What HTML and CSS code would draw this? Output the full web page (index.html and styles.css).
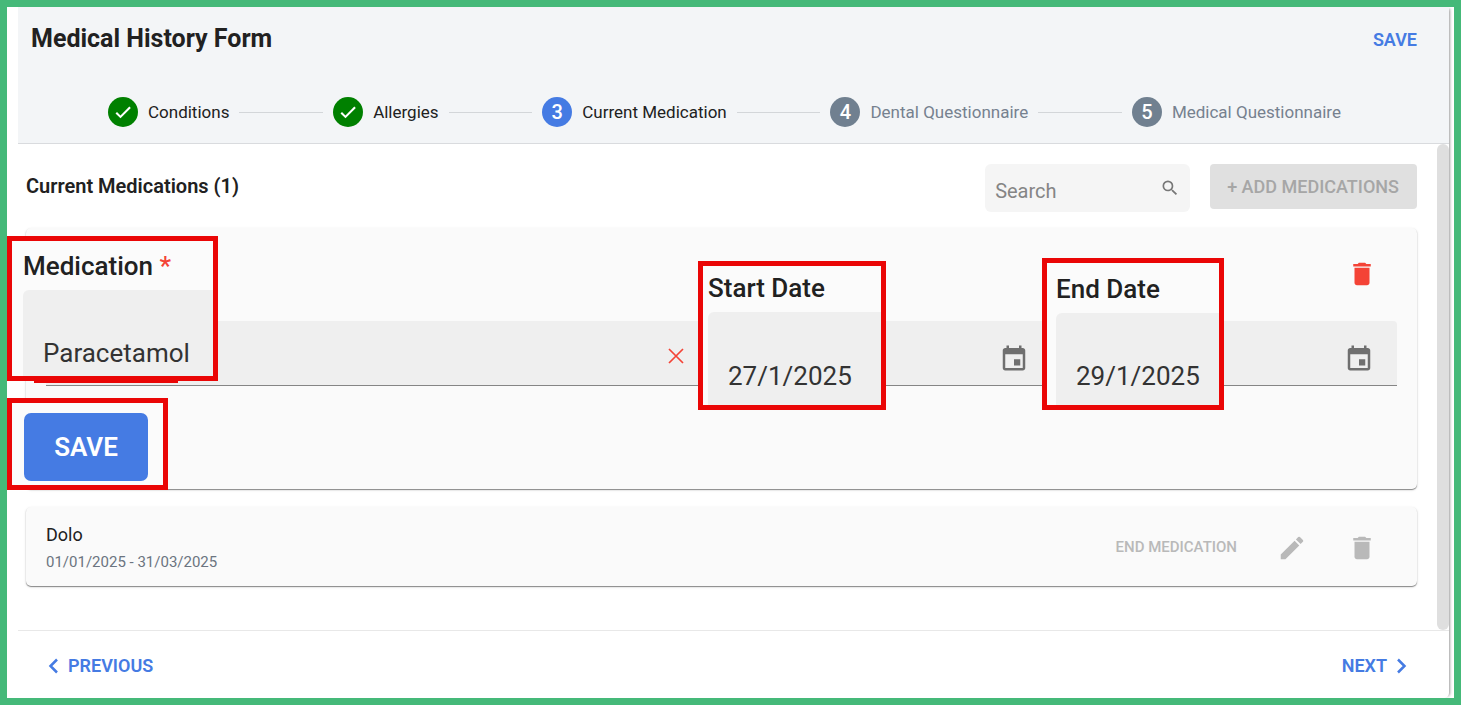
FILE: index.html
```html
<!DOCTYPE html>
<html lang="en">
<head>
<meta charset="utf-8">
<title>Medical History Form</title>
<link rel="stylesheet" href="styles.css">
</head>
<body>
<div class="frame">
<main class="panel">
  <header class="header">
    <div class="title-row">
      <h1 class="title">Medical History Form</h1>
      <button class="link-button" type="button">SAVE</button>
    </div>
    <ol class="stepper">
      <li class="step"><span class="badge done"><svg width="20" height="20" viewBox="0 0 24 24" aria-hidden="true"><path fill="currentColor" d="M9 16.2 4.8 12l-1.8 1.800L9 19.600 21.400 7.200l-1.800-1.800z"/></svg></span>Conditions</li>
      <li class="line"></li>
      <li class="step"><span class="badge done"><svg width="20" height="20" viewBox="0 0 24 24" aria-hidden="true"><path fill="currentColor" d="M9 16.2 4.8 12l-1.8 1.800L9 19.600 21.400 7.200l-1.800-1.800z"/></svg></span>Allergies</li>
      <li class="line"></li>
      <li class="step" aria-current="step"><span class="badge current">3</span>Current Medication</li>
      <li class="line"></li>
      <li class="step pending"><span class="badge">4</span>Dental Questionnaire</li>
      <li class="line"></li>
      <li class="step pending"><span class="badge">5</span>Medical Questionnaire</li>
    </ol>
  </header>

  <div class="body">
    <section class="content">
      <div class="toolbar">
        <h2 class="subtitle">Current Medications (1)</h2>
        <div class="search">
          <input class="search-input" type="text" placeholder="Search" aria-label="Search">
          <svg class="search-icon" width="20" height="20" viewBox="0 0 24 24" aria-hidden="true"><path fill="currentColor" d="M15.5 14h-.79l-.28-.27A6.47 6.47 0 0 0 16 9.5 6.5 6.5 0 1 0 9.5 16c1.61 0 3.09-.59 4.23-1.57l.27.28v.79l5 4.99L20.49 19l-4.99-5zm-6 0C7.01 14 5 11.99 5 9.5S7.01 5 9.5 5 14 7.01 14 9.5 11.99 14 9.5 14z"/></svg>
        </div>
        <button class="add-button" type="button" disabled>+ ADD MEDICATIONS</button>
      </div>

      <form class="card edit-card">
        <div class="edit-top">
          <button class="icon-button danger" type="button" aria-label="Delete"><svg width="30" height="30" viewBox="0 0 24 24" aria-hidden="true"><path fill="currentColor" d="M6 19c0 1.1.9 2 2 2h8c1.1 0 2-.9 2-2V7H6v12zM19 4h-3.500l-1-1h-5l-1 1H5v2h14V4z"/></svg></button>
        </div>
        <div class="fields">
          <div class="field">
            <div class="callout callout-medication">
              <label class="label" for="medication">Medication <span class="required">*</span></label>
              <input class="value" id="medication" type="text" value="Paracetamol">
            </div>
            <button class="icon-button danger" type="button" aria-label="Clear"><svg width="16" height="16" viewBox="0 0 16 16" aria-hidden="true"><path fill="none" stroke="currentColor" stroke-width="1.7" d="M1 1l14 14M15 1 1 15"/></svg></button>
          </div>
          <div class="field date-field">
            <div class="callout callout-start">
              <label class="label" for="start">Start Date</label>
              <input class="value" id="start" type="text" value="27/1/2025">
            </div>
            <button class="icon-button" type="button" aria-label="Pick start date"><svg width="30" height="30" viewBox="0 0 24 24" aria-hidden="true"><path fill="currentColor" d="M19 4h-1V2h-2v2H8V2H6v2H5c-1.110 0-2 .9-2 2v14c0 1.100.89 2 2 2h14c1.100 0 2-.9 2-2V6c0-1.100-.9-2-2-2zm0 16H5V9h14v11zm-7-7h5v5h-5z"/></svg></button>
          </div>
          <div class="field date-field">
            <div class="callout callout-end">
              <label class="label" for="end">End Date</label>
              <input class="value" id="end" type="text" value="29/1/2025">
            </div>
            <button class="icon-button" type="button" aria-label="Pick end date"><svg width="30" height="30" viewBox="0 0 24 24" aria-hidden="true"><path fill="currentColor" d="M19 4h-1V2h-2v2H8V2H6v2H5c-1.110 0-2 .9-2 2v14c0 1.100.89 2 2 2h14c1.100 0 2-.9 2-2V6c0-1.100-.9-2-2-2zm0 16H5V9h14v11zm-7-7h5v5h-5z"/></svg></button>
          </div>
        </div>
        <div class="callout callout-save"><button class="save-button" type="button">SAVE</button></div>
      </form>

      <article class="card item">
        <div class="item-text">
          <div class="item-name">Dolo</div>
          <div class="item-dates">01/01/2025 - 31/03/2025</div>
        </div>
        <button class="end-button" type="button" disabled>END MEDICATION</button>
        <button class="icon-button muted" type="button" disabled aria-label="Edit"><svg width="30" height="30" viewBox="0 0 24 24" aria-hidden="true"><path fill="currentColor" d="M3 17.250V21h3.750L17.810 9.940l-3.750-3.750L3 17.250zM20.710 7.040a1 1 0 0 0 0-1.410l-2.340-2.340a1 1 0 0 0-1.410 0l-1.830 1.830 3.750 3.750 1.830-1.830z"/></svg></button>
        <button class="icon-button muted" type="button" disabled aria-label="Delete"><svg width="30" height="30" viewBox="0 0 24 24" aria-hidden="true"><path fill="currentColor" d="M6 19c0 1.100.9 2 2 2h8c1.100 0 2-.9 2-2V7H6v12zM19 4h-3.500l-1-1h-5l-1 1H5v2h14V4z"/></svg></button>
      </article>
    </section>
    <div class="scrollbar"></div>
  </div>

  <footer class="footer">
    <button class="link-button" type="button"><svg width="10" height="16" viewBox="0 0 10 16" aria-hidden="true"><path fill="none" stroke="currentColor" stroke-width="2.500" d="M9 1.500 2.500 8 9 14.500"/></svg>PREVIOUS</button>
    <button class="link-button" type="button">NEXT<svg width="10" height="16" viewBox="0 0 10 16" aria-hidden="true"><path fill="none" stroke="currentColor" stroke-width="2.500" d="M1 1.500 7.500 8 1 14.500"/></svg></button>
  </footer>
</main>
</div>
</body>
</html>
```
FILE: styles.css
```css
* { box-sizing: border-box; }
body {
  margin: 0;
  font-family: Roboto, "Liberation Sans", sans-serif;
  font-size: 18px;
  line-height: 24px;
  color: #212121;
}
button, input {
  font: inherit;
  color: inherit;
  border: 0;
  padding: 0;
  background: none;
}
h1, h2, ol { margin: 0; padding: 0; }
svg { display: block; }

.frame {
  min-height: 100vh;
  display: flex;
  border: 7px solid #45b979;
  padding: 0 5px 0 11px;
  overflow: hidden;
}
.panel {
  flex: 1;
  display: flex;
  flex-direction: column;
  background: #fff;
  border-radius: 0 0 5px 0;
  box-shadow: 3px 0 3px -2px rgba(0, 0, 0, .4);
  clip-path: inset(0 -5px 0 -11px);
}

.header {
  background: #f3f5f7;
  border-bottom: 1px solid #d9dbde;
  padding-bottom: 16px;
}
.title-row {
  display: flex;
  justify-content: space-between;
  align-items: flex-end;
  padding: 16px 32px 0 13px;
}
.title {
  font-size: 25px;
  line-height: 32px;
  font-weight: 700;
}
.link-button {
  display: flex;
  align-items: center;
  gap: 10px;
  color: #457be3;
  font-weight: 600;
}
.title-row .link-button { line-height: 30px; }
.stepper {
  display: flex;
  align-items: center;
  gap: 10px;
  margin-top: 42px;
  padding: 0 108px 0 90px;
  list-style: none;
  font-size: 17px;
}
.step {
  display: flex;
  align-items: center;
  gap: 10px;
  white-space: nowrap;
}
.pending { color: #76818f; }
.line {
  flex: 1;
  height: 1px;
  background: #d3d6d9;
}
.badge {
  display: grid;
  place-items: center;
  width: 30px;
  height: 30px;
  border-radius: 50%;
  background: #708090;
  color: #fff;
  font-size: 20px;
  font-weight: 500;
}
.done { background: #008000; }
.current { background: #457be3; }

.body {
  flex: 1;
  display: flex;
}
.content {
  flex: 1;
  padding: 20px 20px 43px 8px;
}
.scrollbar {
  width: 12px;
  border-radius: 6px;
  background: #dfdfdf;
}
.toolbar {
  display: flex;
  align-items: flex-start;
  gap: 20px;
}
.subtitle {
  flex: 1;
  font-size: 20px;
  line-height: 45px;
  font-weight: 600;
}
.search {
  display: flex;
  align-items: center;
  width: 205px;
  height: 48px;
  padding: 0 10px;
  border-radius: 6px;
  background: #f5f5f5;
  color: #777;
}
.search-input {
  flex: 1;
  min-width: 0;
  padding-top: 6px;
  font-size: 20px;
}
.search-input::placeholder { color: #858585; opacity: 1; }
.add-button {
  height: 45px;
  padding: 0 18px 0 17px;
  border-radius: 4px;
  background: #e0e0e0;
  color: #a6a6a6;
  font-weight: 500;
}

.card {
  background: #fafafa;
  border-radius: 5px;
  box-shadow: 0 1px 1px rgba(0, 0, 0, .42), 0 1px 3px rgba(0, 0, 0, .12);
}
.edit-card {
  position: relative;
  margin-top: 16px;
  padding: 26px 20px 103px;
}
.edit-top {
  display: flex;
  justify-content: flex-end;
  padding: 5px 20px 32px;
}
.fields {
  display: grid;
  grid-template-columns: 661fr 345fr 345fr;
  border-bottom: 1px solid #858585;
}
.field {
  position: relative;
  display: flex;
  align-items: center;
  justify-content: flex-end;
  height: 64px;
  padding: 6px 23px 0 0;
  background: #efefef;
}
.date-field { padding-top: 10px; }
.field:last-child { border-radius: 0 4px 0 0; }
.field:first-child { border-radius: 4px 0 0; }
.icon-button { color: #6f6f6f; }
.danger { color: #f44336; }
.muted { color: #b9b9b9; }

.callout {
  position: absolute;
  display: flex;
  flex-direction: column;
  border: 5px solid #ea0606;
  background: #fbfbfb;
}
.callout-medication {
  left: -39px;
  top: -85px;
  width: 211px;
  height: 145px;
  padding: 10px 0 0 11px;
}
.callout-medication::after {
  content: "";
  position: absolute;
  left: 22px;
  bottom: -7px;
  width: 144px;
  height: 3px;
  background: #ea0606;
}
.callout-start {
  left: -9px;
  top: -60px;
  width: 188px;
  height: 149px;
  padding: 7px 0 0 5px;
}
.callout-end {
  left: -10px;
  top: -63px;
  width: 182px;
  height: 152px;
  padding: 11px 0 0 9px;
}
.label {
  font-size: 26px;
  line-height: 30px;
  font-weight: 500;
  white-space: nowrap;
}
.required { color: #f44336; }
.value {
  flex: 1;
  width: 100%;
  min-height: 0;
  margin-top: 9px;
  padding: 34px 0 0 20px;
  border-radius: 6px 0 0;
  background: #efefef;
  color: #333;
  font-size: 26px;
  line-height: 32px;
}
.callout-medication .value { padding-top: 40px; }
.callout-save {
  left: -19px;
  top: 170px;
  width: 161px;
  height: 92px;
  padding: 10px 0 0 12px;
}
.save-button {
  width: 124px;
  height: 68px;
  border-radius: 7px;
  background: #457be3;
  color: #fff;
  font-size: 26px;
  font-weight: 600;
}

.item {
  display: flex;
  align-items: center;
  margin-top: 18px;
  padding: 14px 40px 11px 20px;
}
.item-text { flex: 1; }
.item-name { line-height: 28px; }
.item-dates {
  color: #6b7480;
  font-size: 15px;
  line-height: 26px;
}
.end-button {
  padding-bottom: 3px;
  color: #b9b9b9;
  font-size: 15px;
  font-weight: 500;
}
.item .icon-button { margin-left: 40px; }

.footer {
  display: flex;
  align-items: center;
  justify-content: space-between;
  height: 68px;
  padding: 2px 42px 0 30px;
  border-top: 1px solid #e8e8e8;
}
```
